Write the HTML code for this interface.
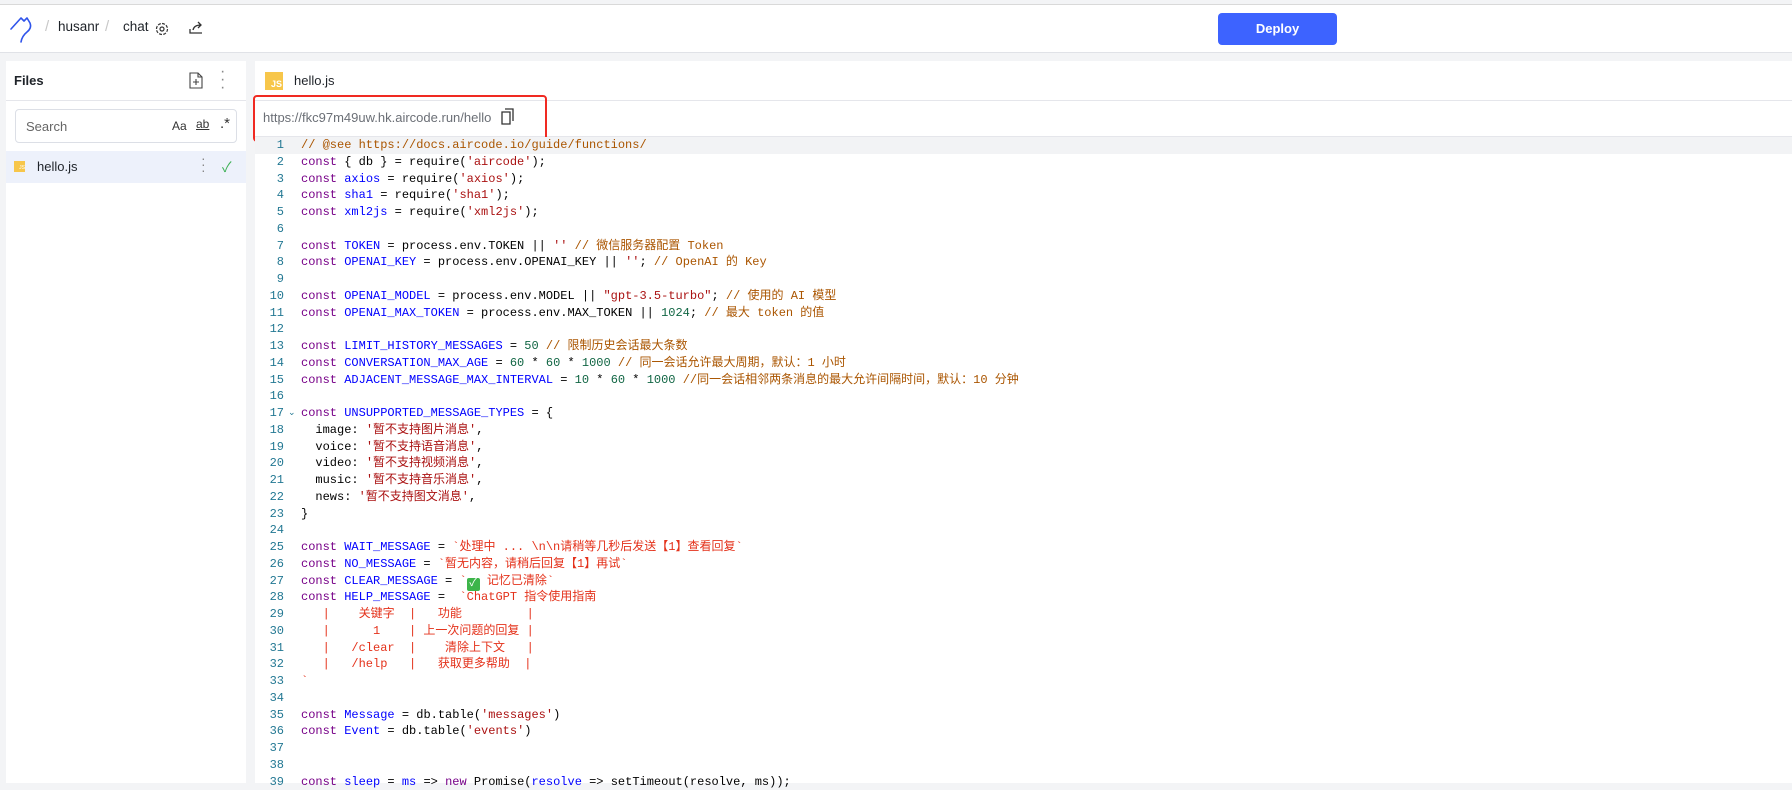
<!DOCTYPE html>
<html><head><meta charset="utf-8"><style>
*{box-sizing:border-box;margin:0;padding:0}
body{width:1792px;height:783px;overflow:hidden;background:#f3f4f6;font-family:"Liberation Sans","Noto Sans CJK SC",sans-serif;position:relative;color:#1f2329}
.hdr{position:absolute;left:0;top:4px;width:1792px;height:49px;background:#fff;border-top:1px solid #d9d9d9;border-bottom:1px solid #e0e2e7}
.abs{position:absolute}
.panel{position:absolute;background:#fff}
.code{position:absolute;left:255px;top:137px;width:1537px;font-family:"Liberation Mono","Noto Sans CJK SC",monospace;font-size:12px;color:#000}
.ln{height:16.75px;line-height:16.75px;white-space:pre;position:relative}
.ln .n{position:absolute;left:0;width:29px;text-align:right;color:#237893}
.ln .c{position:absolute;left:46px}
.ln .k{color:#770088}.ln .d{color:#0000ff}.ln .s{color:#a11}.ln .m{color:#a50}.ln .u{color:#164}.ln .t{color:#e4321b}
</style></head><body>
<div class="hdr">
 <svg class="abs" style="left:9px;top:10px" width="26" height="28" viewBox="0 0 26 28"><path d="M2 14 L12 3 L15 6 L18 3 L21 8 Q23 13 18 17 Q13 21 12 27" fill="none" stroke="#2f54eb" stroke-width="1.6" stroke-linecap="round" stroke-linejoin="round"/></svg>
 <div class="abs" style="left:45px;top:13px;font-size:15px;color:#c8c8c8">/</div>
 <div class="abs" style="left:58px;top:14px;font-size:13.5px">husanr</div>
 <div class="abs" style="left:105px;top:13px;font-size:15px;color:#c8c8c8">/</div>
 <div class="abs" style="left:123px;top:14px;font-size:13.5px">chat</div>
 <svg class="abs" style="left:155px;top:17px" width="14" height="14" viewBox="0 0 14 14"><circle cx="7" cy="7" r="5.5" fill="none" stroke="#333" stroke-width="1.2" stroke-dasharray="3 1.3"/><circle cx="7" cy="7" r="2" fill="none" stroke="#333" stroke-width="1.2"/></svg>
 <svg class="abs" style="left:189px;top:16px" width="15" height="14" viewBox="0 0 15 14"><path d="M1 8 V12 H13 M4 9 Q5 4 12 4 M9 1 L12 4 L9 7" fill="none" stroke="#333" stroke-width="1.3"/></svg>
 <div class="abs" style="left:1218px;top:8px;width:119px;height:32px;background:#3d63ff;border-radius:4px;color:#fff;font-size:13px;font-weight:bold;text-align:center;line-height:32px">Deploy</div>
</div>

<div class="panel" style="left:6px;top:61px;width:240px;height:722px">
 <div class="abs" style="left:8px;top:12px;font-size:13px;font-weight:bold">Files</div>
 <svg class="abs" style="left:183px;top:11px" width="14" height="17" viewBox="0 0 14 17"><path d="M1 1 H9 L13 5 V16 H1 Z M9 1 V5 H13 M7 7 V13 M4 10 H10" fill="none" stroke="#444" stroke-width="1.1"/></svg>
 <div class="abs" style="left:214px;top:7px;font-size:16px;color:#888;line-height:8px">·<br>·<br>·</div>
 <div class="abs" style="left:0;top:39px;width:240px;border-top:1px solid #e5e6eb"></div>
 <div class="abs" style="left:9px;top:48px;width:222px;height:34px;border:1px solid #dcdfe6;border-radius:4px">
  <div class="abs" style="left:10px;top:9px;font-size:13px;color:#666">Search</div>
  <div class="abs" style="left:156px;top:9px;font-size:12px;color:#333">Aa</div>
  <div class="abs" style="left:180px;top:7px;font-size:12px;color:#333;text-decoration:underline">ab</div>
  <div class="abs" style="left:204px;top:5px;font-size:15px;color:#333">.*</div>
 </div>
 <div class="abs" style="left:0;top:90px;width:240px;height:32px;background:#edf1fb">
  <div class="abs" style="left:8px;top:10px;width:11px;height:11px;background:#f7c64a;font-size:5px;color:#fff;text-align:right;line-height:14px">JS</div>
  <div class="abs" style="left:31px;top:8px;font-size:13px">hello.js</div>
  <div class="abs" style="left:195px;top:4px;font-size:14px;color:#888;line-height:6px">·<br>·<br>·</div>
  <div class="abs" style="left:216px;top:6px;font-size:14px;color:#3cb054">✓</div>
 </div>
</div>

<div class="panel" style="left:255px;top:61px;width:1537px;height:722px">
 <div class="abs" style="left:10px;top:11px;width:18px;height:18px;background:#f7c64a;color:#fff;font-size:9px;font-weight:bold;text-align:right;line-height:24px;padding-right:1px">JS</div>
 <div class="abs" style="left:39px;top:12px;font-size:13px">hello.js</div>
 <div class="abs" style="left:0;top:39px;width:1537px;border-top:1px solid #e5e6eb"></div>
 <div class="abs" style="left:8px;top:49px;font-size:13px;color:#6b6f76">https://fkc97m49uw.hk.aircode.run/hello</div>
 <svg class="abs" style="left:246px;top:47px" width="14" height="17" viewBox="0 0 14 17"><path d="M4 1 H12 V13 M1 4 H9 V16 H1 Z" fill="none" stroke="#333" stroke-width="1.3"/></svg>
 <div class="abs" style="left:0;top:75px;width:1537px;border-top:1px solid #e5e6eb"></div>
</div>
<div class="abs" style="left:253px;top:95px;width:294px;height:47px;border:2.5px solid #f02a22;border-radius:4px"></div>

<div class="abs" style="left:255px;top:137px;width:1537px;height:17px;background:#f2f3f5"></div>
<div class="code">
<div class="ln"><span class="n">1</span><span class="c m">// @see https://docs.aircode.io/guide/functions/</span></div>
<div class="ln"><span class="n">2</span><span class="c"><span class="k">const</span> { db } = require(<span class="s">'aircode'</span>);</span></div>
<div class="ln"><span class="n">3</span><span class="c"><span class="k">const</span> <span class="d">axios</span> = require(<span class="s">'axios'</span>);</span></div>
<div class="ln"><span class="n">4</span><span class="c"><span class="k">const</span> <span class="d">sha1</span> = require(<span class="s">'sha1'</span>);</span></div>
<div class="ln"><span class="n">5</span><span class="c"><span class="k">const</span> <span class="d">xml2js</span> = require(<span class="s">'xml2js'</span>);</span></div>
<div class="ln"><span class="n">6</span></div>
<div class="ln"><span class="n">7</span><span class="c"><span class="k">const</span> <span class="d">TOKEN</span> = process.env.TOKEN || <span class="s">''</span> <span class="m">// 微信服务器配置 Token</span></span></div>
<div class="ln"><span class="n">8</span><span class="c"><span class="k">const</span> <span class="d">OPENAI_KEY</span> = process.env.OPENAI_KEY || <span class="s">''</span>; <span class="m">// OpenAI 的 Key</span></span></div>
<div class="ln"><span class="n">9</span></div>
<div class="ln"><span class="n">10</span><span class="c"><span class="k">const</span> <span class="d">OPENAI_MODEL</span> = process.env.MODEL || <span class="s">"gpt-3.5-turbo"</span>; <span class="m">// 使用的 AI 模型</span></span></div>
<div class="ln"><span class="n">11</span><span class="c"><span class="k">const</span> <span class="d">OPENAI_MAX_TOKEN</span> = process.env.MAX_TOKEN || <span class="u">1024</span>; <span class="m">// 最大 token 的值</span></span></div>
<div class="ln"><span class="n">12</span></div>
<div class="ln"><span class="n">13</span><span class="c"><span class="k">const</span> <span class="d">LIMIT_HISTORY_MESSAGES</span> = <span class="u">50</span> <span class="m">// 限制历史会话最大条数</span></span></div>
<div class="ln"><span class="n">14</span><span class="c"><span class="k">const</span> <span class="d">CONVERSATION_MAX_AGE</span> = <span class="u">60</span> * <span class="u">60</span> * <span class="u">1000</span> <span class="m">// 同一会话允许最大周期，默认：1 小时</span></span></div>
<div class="ln"><span class="n">15</span><span class="c"><span class="k">const</span> <span class="d">ADJACENT_MESSAGE_MAX_INTERVAL</span> = <span class="u">10</span> * <span class="u">60</span> * <span class="u">1000</span> <span class="m">//同一会话相邻两条消息的最大允许间隔时间，默认：10 分钟</span></span></div>
<div class="ln"><span class="n">16</span></div>
<div class="ln"><span class="n">17</span><span class="c"><span class="k">const</span> <span class="d">UNSUPPORTED_MESSAGE_TYPES</span> = {</span><span style="position:absolute;left:33px;color:#237893;font-size:9px">⌄</span></div>
<div class="ln"><span class="n">18</span><span class="c">  image: <span class="s">'暂不支持图片消息'</span>,</span></div>
<div class="ln"><span class="n">19</span><span class="c">  voice: <span class="s">'暂不支持语音消息'</span>,</span></div>
<div class="ln"><span class="n">20</span><span class="c">  video: <span class="s">'暂不支持视频消息'</span>,</span></div>
<div class="ln"><span class="n">21</span><span class="c">  music: <span class="s">'暂不支持音乐消息'</span>,</span></div>
<div class="ln"><span class="n">22</span><span class="c">  news: <span class="s">'暂不支持图文消息'</span>,</span></div>
<div class="ln"><span class="n">23</span><span class="c">}</span></div>
<div class="ln"><span class="n">24</span></div>
<div class="ln"><span class="n">25</span><span class="c"><span class="k">const</span> <span class="d">WAIT_MESSAGE</span> = <span class="t">`处理中 ... \n\n请稍等几秒后发送【1】查看回复`</span></span></div>
<div class="ln"><span class="n">26</span><span class="c"><span class="k">const</span> <span class="d">NO_MESSAGE</span> = <span class="t">`暂无内容，请稍后回复【1】再试`</span></span></div>
<div class="ln"><span class="n">27</span><span class="c"><span class="k">const</span> <span class="d">CLEAR_MESSAGE</span> = <span class="t">`<span style="display:inline-block;width:13px;height:13px;background:#3db54a;border-radius:2px;color:#fff;font-size:11px;line-height:13px;text-align:center;vertical-align:-2px">✓</span> 记忆已清除`</span></span></div>
<div class="ln"><span class="n">28</span><span class="c"><span class="k">const</span> <span class="d">HELP_MESSAGE</span> =  <span class="t">`ChatGPT 指令使用指南</span></span></div>
<div class="ln"><span class="n">29</span><span class="c t">   |    关键字  |   功能         |</span></div>
<div class="ln"><span class="n">30</span><span class="c t">   |      1    | 上一次问题的回复 |</span></div>
<div class="ln"><span class="n">31</span><span class="c t">   |   /clear  |    清除上下文   |</span></div>
<div class="ln"><span class="n">32</span><span class="c t">   |   /help   |   获取更多帮助  |</span></div>
<div class="ln"><span class="n">33</span><span class="c t">`</span></div>
<div class="ln"><span class="n">34</span></div>
<div class="ln"><span class="n">35</span><span class="c"><span class="k">const</span> <span class="d">Message</span> = db.table(<span class="s">'messages'</span>)</span></div>
<div class="ln"><span class="n">36</span><span class="c"><span class="k">const</span> <span class="d">Event</span> = db.table(<span class="s">'events'</span>)</span></div>
<div class="ln"><span class="n">37</span></div>
<div class="ln"><span class="n">38</span></div>
<div class="ln"><span class="n">39</span><span class="c"><span class="k">const</span> <span class="d">sleep</span> = <span class="d">ms</span> =&gt; <span class="k">new</span> Promise(<span class="d">resolve</span> =&gt; setTimeout(resolve, ms));</span></div>
</div>
</body></html>
